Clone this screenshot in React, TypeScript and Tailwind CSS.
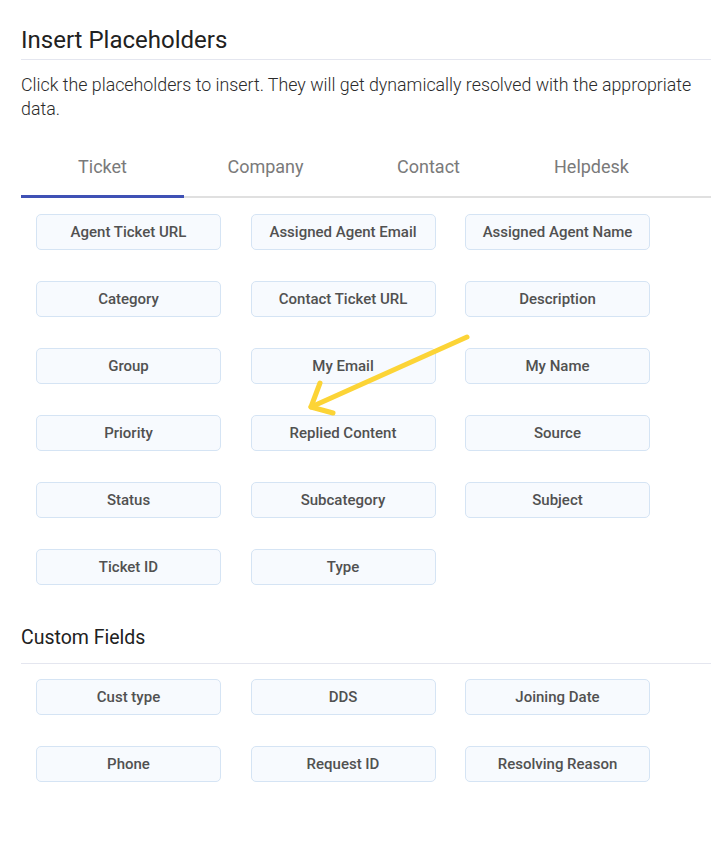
import React, { useState } from 'react';

const ticketFields = [
  'Agent Ticket URL',
  'Assigned Agent Email',
  'Assigned Agent Name',
  'Category',
  'Contact Ticket URL',
  'Description',
  'Group',
  'My Email',
  'My Name',
  'Priority',
  'Replied Content',
  'Source',
  'Status',
  'Subcategory',
  'Subject',
  'Ticket ID',
  'Type',
];

const customFields = ['Cust type', 'DDS', 'Joining Date', 'Phone', 'Request ID', 'Resolving Reason'];

const tabs = ['Ticket', 'Company', 'Contact', 'Helpdesk'];

const PlaceholderGrid: React.FC<{ items: string[] }> = ({ items }) => (
  <div className="grid grid-cols-[185px_185px_185px] gap-x-[29.5px] gap-y-[31px] pl-[15px]">
    {items.map((item) => (
      <button
        key={item}
        className="h-[36px] rounded-[5px] border border-[#d5e4f4] bg-[#f7fafe] text-[15px] font-medium text-[#515151]"
      >
        {item}
      </button>
    ))}
  </div>
);

export default function App() {
  const [active, setActive] = useState(0);

  return (
    <div className="relative min-h-[842px] w-[718px] bg-white font-['Roboto',sans-serif]">
      <div className="pl-[21px] pr-[7px] pt-[24px]">
        <h1 className="text-[24px] leading-[32px] text-[#212121]">Insert Placeholders</h1>
        <div className="mt-[3px] h-px bg-[#e4e6ef]" />
        <p className="mt-[13px] text-[17.8px] font-light leading-[24px] text-[#2b2b2b]">
          Click the placeholders to insert. They will get dynamically resolved with the appropriate data.
        </p>

        <div className="mt-[19px] flex border-b-2 border-[#e0e0e0]">
          {tabs.map((tab, i) => (
            <button
              key={tab}
              onClick={() => setActive(i)}
              className={`-mb-[2px] h-[58px] w-[163px] border-b-[3px] pb-[2px] text-[18px] text-[#7a7a7a] ${
                active === i ? 'border-[#3f51b5]' : 'border-transparent'
              }`}
            >
              {tab}
            </button>
          ))}
        </div>

        <div className="mt-[16px]">
          <PlaceholderGrid items={ticketFields} />
        </div>

        <h2 className="mt-[40px] text-[19.5px] leading-[26px] text-[#212121]">Custom Fields</h2>
        <div className="mt-[12px] h-px bg-[#e4e6ef]" />
        <div className="mt-[15px]">
          <PlaceholderGrid items={customFields} />
        </div>
      </div>

      <svg
        className="pointer-events-none absolute left-0 top-0"
        width="718"
        height="842"
        viewBox="0 0 718 842"
      >
        <g stroke="#fcd436" strokeWidth="5" strokeLinecap="round" strokeLinejoin="round" fill="none">
          <path d="M467 337 L311 407" />
          <path d="M320 383 L311 407 L333 413" />
        </g>
      </svg>
    </div>
  );
}
